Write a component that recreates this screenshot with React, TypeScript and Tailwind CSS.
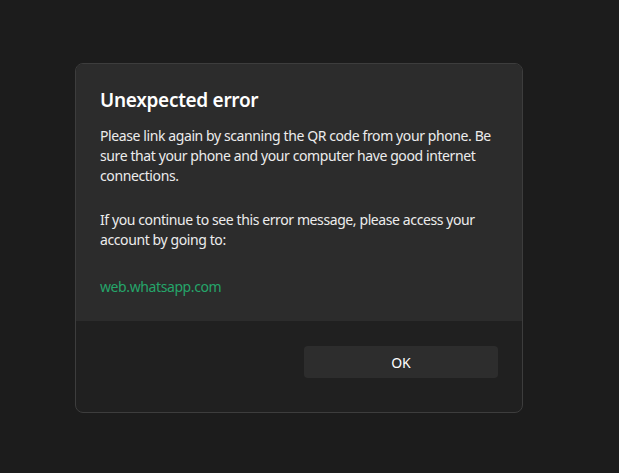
export default function App() {
	return (
		<div
			className="h-[473px] w-full bg-[#1c1c1c] pt-[63px] pl-[75px]"
			style={{ fontFamily: '"Noto Sans", "Open Sans", sans-serif' }}
		>
			<div className="flex h-[350px] w-[448px] flex-col overflow-hidden rounded-lg border border-[#3d3d3d] bg-[#202020]">
				<div className="bg-[#2c2c2c] px-6 pt-[22px] pb-6">
					<h1 className="mb-[12px] text-[19px] leading-7 font-semibold tracking-[-0.3px] text-white">
						Unexpected error
					</h1>
					<p className="text-[14px] leading-5 tracking-[-0.4px] text-[#ececec]">
						Please link again by scanning the QR code from your phone. Be
						sure that your phone and your computer have good internet
						connections.
					</p>
					<p className="mt-6 text-[14px] leading-5 tracking-[-0.4px] text-[#ececec]">
						If you continue to see this error message, please access your
						account by going to:
					</p>
					<a className="mt-[27px] block text-[14px] leading-5 tracking-[-0.4px] text-[#25a56a]">
						web.whatsapp.com
					</a>
				</div>
				<div className="flex flex-1 justify-end px-6 pt-[25px]">
					<button className="h-8 w-[194px] rounded-[4px] bg-[#2d2d2d] text-[14px] text-white">
						OK
					</button>
				</div>
			</div>
		</div>
	);
}
